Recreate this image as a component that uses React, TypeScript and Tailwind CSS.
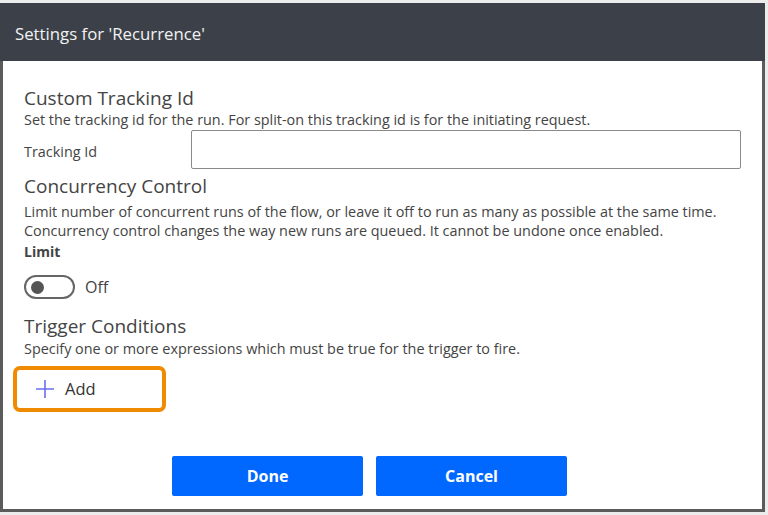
import React from "react";

const font = { fontFamily: '"Open Sans", "Noto Sans", sans-serif' };

function Toggle() {
  return (
    <div className="flex items-center gap-[10px]">
      <span className="flex h-[24px] w-[51px] items-center rounded-full border-2 border-[#666] pl-[5px]">
        <span className="h-[13px] w-[13px] rounded-full bg-[#555]" />
      </span>
      <span className="text-[16px] text-[#444]">Off</span>
    </div>
  );
}

export default function App() {
  return (
    <div className="h-[515px] w-[768px] bg-[#ececec] pr-[3px] pt-[3px] pb-[3px]" style={font}>
      <div className="flex h-full flex-col border-b-[3px] border-r-[3px] border-l-[3px] border-[#5b5b5b] bg-white">
        <div className="-ml-[3px] -mr-[3px] flex h-[58px] items-center bg-[#3c4149] px-[15px] pt-[3px]">
          <h1 className="text-[16.8px] text-[#f2f2f2]">Settings for 'Recurrence'</h1>
        </div>

        <div className="flex flex-1 flex-col px-[21px] pt-[24px] text-[#444]">
          <h2 className="text-[19px] leading-[26px]">Custom Tracking Id</h2>
          <p className="text-[14.4px] leading-[18px]">
            Set the tracking id for the run. For split-on this tracking id is for the initiating request.
          </p>
          <div className="mt-[1px] flex items-center">
            <label className="w-[167px] pt-[5px] text-[14.4px]">Tracking Id</label>
            <input className="h-[39px] w-[550px] rounded-[2px] border border-[#8a8a8a] bg-white" />
          </div>

          <h2 className="mt-[4px] text-[19px] leading-[26px]">Concurrency Control</h2>
          <p className="mt-[3px] text-[14.4px] leading-[19px]">
            Limit number of concurrent runs of the flow, or leave it off to run as many as possible at the same time.
            <br />
            Concurrency control changes the way new runs are queued. It cannot be undone once enabled.
          </p>
          <p className="mt-[3px] text-[14px] font-bold leading-[18px]">Limit</p>
          <div className="mt-[14px]">
            <Toggle />
          </div>

          <h2 className="mt-[14px] text-[19px] leading-[26px]">Trigger Conditions</h2>
          <p className="mt-[1px] text-[14.4px] leading-[18px]">
            Specify one or more expressions which must be true for the trigger to fire.
          </p>
          <button className="-ml-[11px] mt-[8px] flex h-[46px] w-[153px] shrink-0 items-center gap-[10px] rounded-[7px] border-4 border-[#f08a00] pl-[18px]">
            <svg width="20" height="20" viewBox="0 0 20 20" fill="none" stroke="#6b6ef0" strokeWidth="1.6">
              <path d="M10 1v18M1 10h18" />
            </svg>
            <span className="text-[16.5px] text-[#333]">Add</span>
          </button>

          <div className="mt-[44px] flex gap-[13px] pl-[148px]">
            <button className="h-[40px] w-[191px] rounded-[2px] bg-[#0068ff] text-[16px] font-bold text-white">
              Done
            </button>
            <button className="h-[40px] w-[191px] rounded-[2px] bg-[#0068ff] text-[16px] font-bold text-white">
              Cancel
            </button>
          </div>
        </div>
      </div>
    </div>
  );
}
